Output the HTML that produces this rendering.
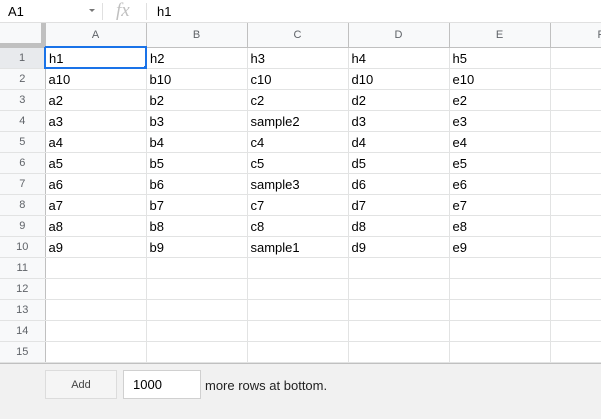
<!DOCTYPE html>
<html><head><style>
*{margin:0;padding:0;box-sizing:border-box}
body{width:601px;height:419px;overflow:hidden;background:#fff;font-family:"Liberation Sans",Arial,sans-serif;position:relative}
.fb{position:absolute;left:0;top:0;width:601px;height:23px;border-bottom:1px solid #e0e0e0;background:#fff}
table{position:absolute;left:0;top:23px;border-collapse:collapse;table-layout:fixed;width:651px}
td{border:1px solid #e2e3e3;height:21px;font-size:13px;color:#000;padding:2px 0 0 3px;white-space:nowrap;overflow:hidden;vertical-align:middle}
tr.h td{height:24px;background:#f8f9fa;color:#5f6368;font-size:11px;text-align:center;padding:0;border:1px solid #c0c0c0;border-top:none}
td.r{background:#f8f9fa;color:#5f6368;font-size:11px;text-align:center;padding:0;border-right:1px solid #c0c0c0;border-left:none}
td.sel{background:#e8eaed}
.foot{position:absolute;left:0;top:363px;width:601px;height:56px;background:#f1f1f1;border-top:1px solid #c0c0c0}
</style></head><body>
<div class="fb">
<div style="position:absolute;left:8px;top:4px;font-size:13px;color:#000">A1</div>
<div style="position:absolute;left:89px;top:9px;width:0;height:0;border-left:3px solid transparent;border-right:3px solid transparent;border-top:3px solid #777"></div>
<div style="position:absolute;left:102px;top:3px;width:1px;height:17px;background:#e0e0e0"></div>
<div style="position:absolute;left:116px;top:0px;font-family:'Liberation Serif',serif;font-style:italic;font-size:19px;color:#c0c0c0">fx</div>
<div style="position:absolute;left:146px;top:3px;width:1px;height:17px;background:#e0e0e0"></div>
<div style="position:absolute;left:157px;top:4px;font-size:13px;color:#000">h1</div>
</div>
<table>
<colgroup><col style="width:45px"><col style="width:101px"><col style="width:101px"><col style="width:101px"><col style="width:101px"><col style="width:101px"><col style="width:101px"></colgroup>
<tr class="h"><td style="background:#f8f9fa;border-left:none"></td><td class="sel">A</td><td>B</td><td>C</td><td>D</td><td>E</td><td style="text-align:left;padding-left:47px">F</td></tr>
<tr><td class="r sel">1</td><td style="border:2px solid #1a73e8;position:relative">h1<div style="position:absolute;right:-4px;bottom:-4px;width:6px;height:6px;background:#1a73e8;border:1px solid #fff"></div></td><td>h2</td><td>h3</td><td>h4</td><td>h5</td><td></td></tr>
<tr><td class="r">2</td><td>a10</td><td>b10</td><td>c10</td><td>d10</td><td>e10</td><td></td></tr>
<tr><td class="r">3</td><td>a2</td><td>b2</td><td>c2</td><td>d2</td><td>e2</td><td></td></tr>
<tr><td class="r">4</td><td>a3</td><td>b3</td><td>sample2</td><td>d3</td><td>e3</td><td></td></tr>
<tr><td class="r">5</td><td>a4</td><td>b4</td><td>c4</td><td>d4</td><td>e4</td><td></td></tr>
<tr><td class="r">6</td><td>a5</td><td>b5</td><td>c5</td><td>d5</td><td>e5</td><td></td></tr>
<tr><td class="r">7</td><td>a6</td><td>b6</td><td>sample3</td><td>d6</td><td>e6</td><td></td></tr>
<tr><td class="r">8</td><td>a7</td><td>b7</td><td>c7</td><td>d7</td><td>e7</td><td></td></tr>
<tr><td class="r">9</td><td>a8</td><td>b8</td><td>c8</td><td>d8</td><td>e8</td><td></td></tr>
<tr><td class="r">10</td><td>a9</td><td>b9</td><td>sample1</td><td>d9</td><td>e9</td><td></td></tr>
<tr><td class="r">11</td><td></td><td></td><td></td><td></td><td></td><td></td></tr>
<tr><td class="r">12</td><td></td><td></td><td></td><td></td><td></td><td></td></tr>
<tr><td class="r">13</td><td></td><td></td><td></td><td></td><td></td><td></td></tr>
<tr><td class="r">14</td><td></td><td></td><td></td><td></td><td></td><td></td></tr>
<tr><td class="r">15</td><td></td><td></td><td></td><td></td><td></td><td></td></tr>
</table>
<div style="position:absolute;left:0;top:23px;width:45px;height:24px;background:#f8f9fa;border-right:4px solid #c0c0c0;border-bottom:4px solid #c0c0c0"></div>
<div class="foot">
<div style="position:absolute;left:45px;top:6px;width:72px;height:29px;border:1px solid #dcdcdc;background:#f5f5f5;font-size:11px;color:#444;text-align:center;line-height:29px">Add</div>
<div style="position:absolute;left:123px;top:6px;width:78px;height:29px;border:1px solid #d0d0d0;background:#fff;font-size:13px;color:#000;padding:6px 0 0 9px">1000</div>
<div style="position:absolute;left:205px;top:14px;font-size:13px;color:#222">more rows at bottom.</div>
</div>
</body></html>
